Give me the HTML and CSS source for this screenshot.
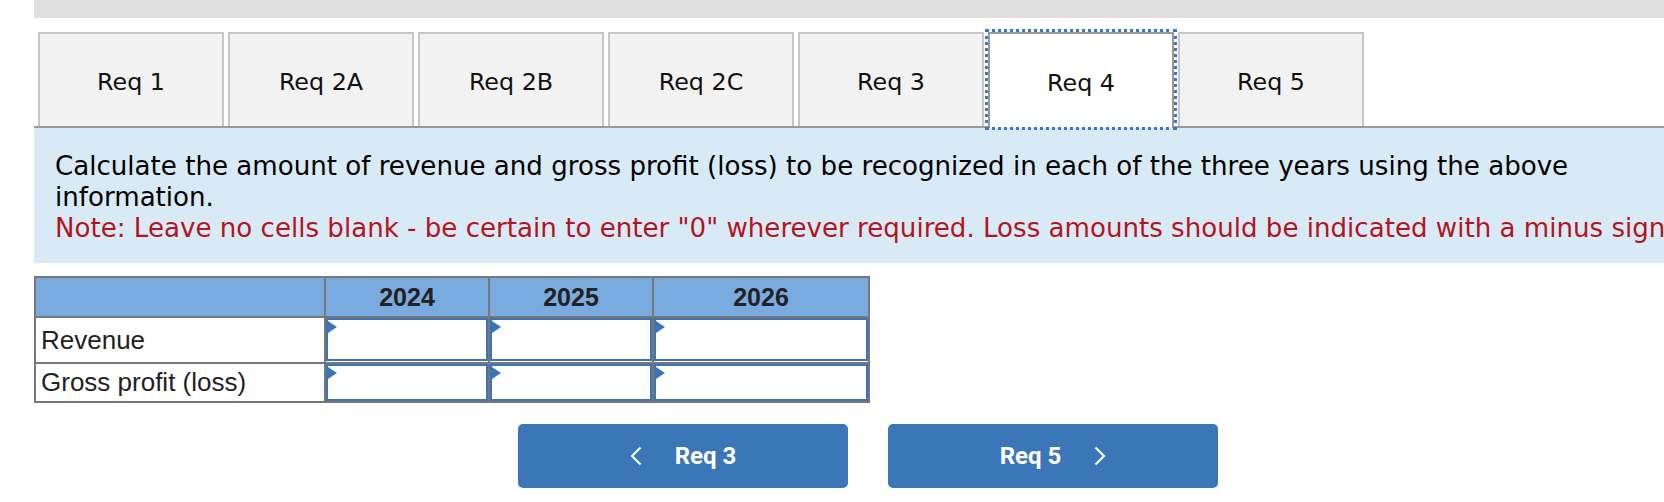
FILE: index.html
```html
<!DOCTYPE html>
<html lang="en">
<head>
<meta charset="utf-8">
<title>Req 4</title>
<link rel="stylesheet" href="styles.css">
</head>
<body>
<div class="page">
  <div class="topbar"></div>
  <div class="tabs">
    <div class="tab">Req 1</div>
    <div class="tab">Req 2A</div>
    <div class="tab">Req 2B</div>
    <div class="tab">Req 2C</div>
    <div class="tab">Req 3</div>
    <div class="tab active">Req 4</div>
    <div class="tab">Req 5</div>
  </div>
  <div class="panel">
    <p class="prompt">Calculate the amount of revenue and gross profit (loss) to be recognized in each of the three years using the above information.</p>
    <p class="note">Note: Leave no cells blank - be certain to enter "0" wherever required. Loss amounts should be indicated with a minus sign.</p>
  </div>
  <table class="grid">
    <colgroup>
      <col class="c-label">
      <col class="c-year">
      <col class="c-year">
      <col class="c-last">
    </colgroup>
    <thead>
      <tr class="head-row">
        <th></th>
        <th>2024</th>
        <th>2025</th>
        <th>2026</th>
      </tr>
    </thead>
    <tbody>
      <tr class="row-a">
        <td class="label">Revenue</td>
        <td class="inp"><div class="field"><input type="text" aria-label="Revenue 2024"></div></td>
        <td class="inp"><div class="field"><input type="text" aria-label="Revenue 2025"></div></td>
        <td class="inp"><div class="field"><input type="text" aria-label="Revenue 2026"></div></td>
      </tr>
      <tr class="row-b">
        <td class="label">Gross profit (loss)</td>
        <td class="inp"><div class="field"><input type="text" aria-label="Gross profit 2024"></div></td>
        <td class="inp"><div class="field"><input type="text" aria-label="Gross profit 2025"></div></td>
        <td class="inp"><div class="field"><input type="text" aria-label="Gross profit 2026"></div></td>
      </tr>
    </tbody>
  </table>
  <div class="nav">
    <div class="nav-btn">
      <svg class="chev" width="12" height="20" viewBox="0 0 12 20"><polyline points="10.5,1.5 2,10 10.5,18.5" fill="none" stroke="#fff" stroke-width="2"/></svg>
      <span>Req 3</span>
    </div>
    <div class="nav-btn">
      <span>Req 5</span>
      <svg class="chev" width="12" height="20" viewBox="0 0 12 20"><polyline points="1.5,1.5 10,10 1.5,18.5" fill="none" stroke="#fff" stroke-width="2"/></svg>
    </div>
  </div>
</div>
</body>
</html>
```
FILE: styles.css
```css
html, body {
  margin: 0;
  padding: 0;
  background: #ffffff;
  overflow: hidden;
}

.page {
  padding-left: 34px;
}

.topbar {
  height: 18px;
  background: #e0e0e0;
}

.tabs {
  display: flex;
  gap: 4px;
  margin-top: 14px;
  padding-left: 4px;
  height: 94px;
  border-bottom: 2px solid #999999;
}

.tab {
  width: 186px;
  box-sizing: border-box;
  border: 2px solid #c6c6c6;
  border-bottom: none;
  background: #f2f2f2;
  display: flex;
  align-items: center;
  justify-content: center;
  padding-top: 3px;
  font-family: "DejaVu Sans", Verdana, sans-serif;
  font-size: 23.8px;
  color: #111111;
}

.tab.active {
  position: relative;
  background: #ffffff;
  border-color: #999999;
  height: 96px;
  align-self: flex-start;
}

.tab.active::after {
  content: "";
  position: absolute;
  left: -5px;
  right: -5px;
  top: -5px;
  bottom: -2px;
  border: 3px dotted #3b78c3;
}

.panel {
  background: #d9eaf7;
  padding: 23px 0 19px 21px;
  font-family: "DejaVu Sans", Verdana, sans-serif;
  font-size: 26.1px;
  line-height: 31px;
  color: #000000;
}

.panel p {
  margin: 0;
}

.prompt {
  max-width: 1590px;
}

.note {
  color: #b4141c;
  white-space: nowrap;
}

.grid {
  margin-top: 13px;
  border-collapse: collapse;
  table-layout: fixed;
  font-family: "Liberation Sans", Arial, sans-serif;
  font-size: 25px;
  color: #222222;
}

.c-label { width: 290px; }
.c-year { width: 164px; }
.c-last { width: 216px; }

.grid th,
.grid td {
  border: 2px solid #777777;
  padding: 0;
}

.grid th {
  background: #7aabe0;
  font-weight: bold;
  text-align: center;
  vertical-align: middle;
}

.head-row {
  height: 40px;
}

.grid td.label {
  padding-left: 5px;
  vertical-align: middle;
  white-space: nowrap;
  font-size: 26px;
}

.field {
  position: relative;
  box-sizing: border-box;
  border: 2px solid #3d74b5;
  margin: 0 0 1px 0;
  background: #ffffff;
}

.row-a .field { height: 43px; }
.row-b .field { height: 37px; margin-bottom: 0; }

.field input {
  display: block;
  width: 100%;
  height: 100%;
  box-sizing: border-box;
  border: none;
  outline: none;
  padding: 0 6px;
  background: transparent;
  font: inherit;
}

.field::before {
  content: "";
  position: absolute;
  left: 0;
  top: 1px;
  border-left: 9px solid #3d74b5;
  border-top: 6px solid transparent;
  border-bottom: 6px solid transparent;
}

.nav {
  display: flex;
  gap: 40px;
  margin-top: 21px;
  padding-left: 484px;
}

.nav-btn {
  width: 330px;
  height: 64px;
  background: #3b76b8;
  border-radius: 5px;
  display: flex;
  align-items: center;
  justify-content: center;
  gap: 33px;
  color: #ffffff;
  font-family: Roboto, "Liberation Sans", sans-serif;
  font-weight: 700;
  font-size: 24px;
}

.chev {
  display: block;
}
```
